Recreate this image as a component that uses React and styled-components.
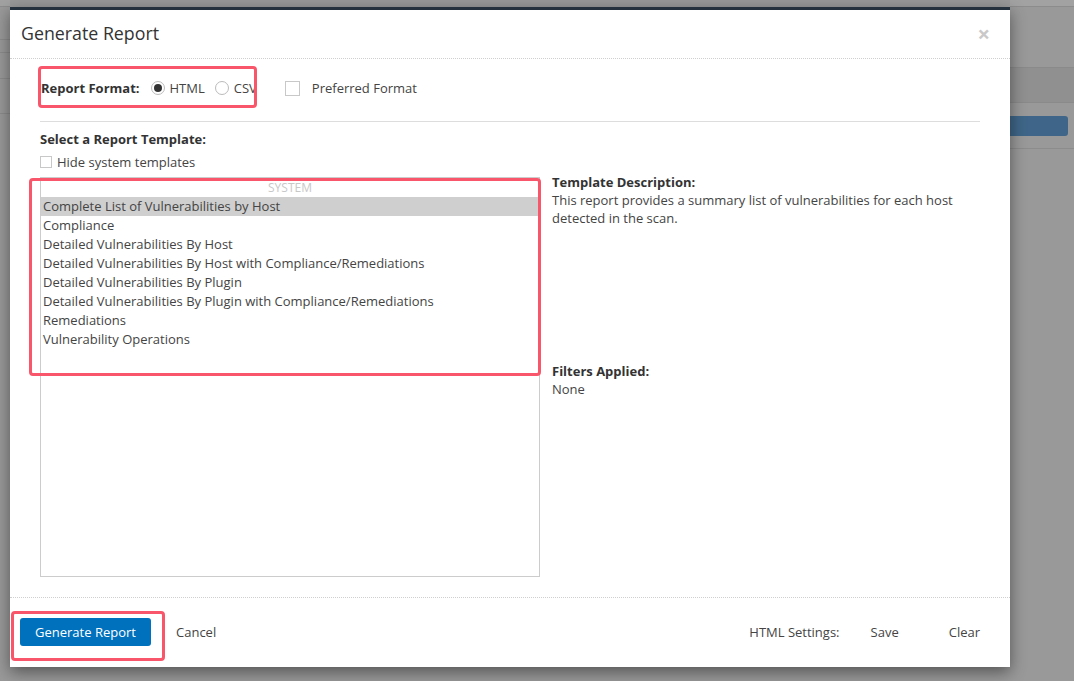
import React from 'react'
import styled, { createGlobalStyle } from "styled-components";

const GlobalStyle = createGlobalStyle`
body{
margin:0;
background:#999;
font-family:"Open Sans", "Liberation Sans", sans-serif;
font-size:13px;
color:#444;
}
`

const Page = styled.div`
width:1074px;
height:681px;
display:flex;
overflow:hidden;
background:#999;
`
// strips of the app that sit behind the overlay
const LeftRail = styled.div`
width:10px;
flex-shrink:0;
background:
  linear-gradient(#a2a2a2 0 6px, #8c8c8c 6px 7px, transparent 7px),
  linear-gradient(transparent 39px, #8c8c8c 39px 40px, transparent 40px 52px, #8c8c8c 52px 53px, transparent 53px 78px, #8c8c8c 78px 79px, transparent 79px 113px, #8c8c8c 113px 114px, transparent 114px);
`
const RightPane = styled.div`
flex:1;
display:flex;
flex-direction:column;
background:
  linear-gradient(#a2a2a2 0 6px, #8c8c8c 6px 7px, transparent 7px 67px, #8a8a8a 67px 68px, #909090 68px 102px, #8a8a8a 102px 103px, transparent 103px 148px, #8c8c8c 148px 149px, transparent 149px);
`
const BgButton = styled.div`
margin:116px 6px 0 0;
height:20px;
border-radius:0 3px 3px 0;
background:#3f6688;
`

const Dialog = styled.div`
position:relative;
z-index:1;
margin-top:7px;
width:1000px;
height:660px;
flex-shrink:0;
background:#fff;
border-top:3px solid #25313d;
box-sizing:border-box;
display:flex;
flex-direction:column;
box-shadow:0 5px 15px rgba(0,0,0,0.45);
`
const Header = styled.div`
height:49px;
box-sizing:border-box;
display:flex;
align-items:center;
justify-content:space-between;
padding:0 20px 2px 11px;
border-bottom:1px dotted #cfcfcf;
`
const Title = styled.h4`
margin:0;
font-size:17.8px;
font-weight:400;
color:#333;
`
const Close = styled.span`
font-size:22px;
font-weight:700;
color:#c9c9c9;
line-height:1;
`
const Body = styled.div`
flex:1;
padding:0 30px;
`
const FormatRow = styled.div`
position:relative;
height:63px;
box-sizing:border-box;
padding-top:18px;
display:flex;
align-items:flex-start;
border-bottom:1px solid #ddd;
line-height:22px;
`
const Bold = styled.span`
font-weight:700;
color:#333;
`
const Label = styled(Bold)`
margin-left:1px;
margin-right:11px;
`
const Option = styled.label`
display:flex;
align-items:center;
margin-right:${p => p.gap}px;
color:#444;
`
const Radio = styled.span`
width:14px;
height:14px;
box-sizing:border-box;
border:1px solid #bbb;
border-radius:50%;
margin-right:5px;
display:flex;
align-items:center;
justify-content:center;
&::after{
content:"";
width:8px;
height:8px;
border-radius:50%;
background:${p => p.checked ? "#333" : "transparent"};
}
`
const Box = styled.span`
width:${p => p.size}px;
height:${p => p.size}px;
box-sizing:border-box;
border:1px solid #c8c8c8;
margin-right:${p => p.gap}px;
background:#fff;
`
// red annotation frames drawn over the form
const Mark = styled.div`
position:absolute;
border:3px solid #f9566b;
border-radius:4px;
pointer-events:none;
`
const SectionTitle = styled(Bold)`
display:block;
margin-top:8px;
line-height:18px;
`
const CheckRow = styled.label`
display:flex;
align-items:center;
margin-top:5px;
line-height:18px;
`
const Columns = styled.div`
display:flex;
gap:12px;
margin-top:6px;
align-items:flex-start;
`
const ListWrap = styled.div`
position:relative;
`
const List = styled.div`
width:500px;
height:400px;
box-sizing:border-box;
border:1px solid #ccc;
`
const Group = styled.div`
height:18px;
line-height:18px;
text-align:center;
font-size:12px;
color:#c8c8c8;
margin-top:1px;
`
const Item = styled.div`
height:19px;
line-height:19px;
padding-left:2px;
color:#444;
background:${p => p.selected ? "#cfcfcf" : "transparent"};
`
const Side = styled.div`
width:428px;
margin-top:-4px;
line-height:18px;
`
const DescBlock = styled.div`
height:189px;
`
const Footer = styled.div`
position:relative;
height:70px;
box-sizing:border-box;
border-top:1px dotted #cfcfcf;
display:flex;
align-items:center;
padding:0 30px 2px 10px;
`
const PrimaryButton = styled.button`
width:131px;
height:28px;
border:none;
border-radius:3px;
background:#0071bc;
color:#fff;
font-family:inherit;
font-size:13px;
margin-right:25px;
`
const LinkText = styled.span`
color:#444;
margin-left:${p => p.gap || 0}px;
`
const Spacer = styled.div`
flex:1;
`

const templates = [
    "Complete List of Vulnerabilities by Host",
    "Compliance",
    "Detailed Vulnerabilities By Host",
    "Detailed Vulnerabilities By Host with Compliance/Remediations",
    "Detailed Vulnerabilities By Plugin",
    "Detailed Vulnerabilities By Plugin with Compliance/Remediations",
    "Remediations",
    "Vulnerability Operations",
]

function App() {
    return (
        <Page>
            <GlobalStyle />
            <LeftRail />
            <Dialog>
                <Header>
                    <Title>Generate Report</Title>
                    <Close>×</Close>
                </Header>
                <Body>
                    <FormatRow>
                        <Label>Report Format:</Label>
                        <Option gap={10}><Radio checked />HTML</Option>
                        <Option gap={28}><Radio />CSV</Option>
                        <Option gap={0}><Box size={15} gap={12} />Preferred Format</Option>
                        <Mark style={{ left: -2, top: 7, width: 213, height: 36 }} />
                    </FormatRow>
                    <SectionTitle>Select a Report Template:</SectionTitle>
                    <CheckRow><Box size={12} gap={5} />Hide system templates</CheckRow>
                    <Columns>
                        <ListWrap>
                            <List>
                                <Group>SYSTEM</Group>
                                {templates.map((t, i) => (
                                    <Item key={t} selected={i === 0}>{t}</Item>
                                ))}
                            </List>
                            <Mark style={{ left: -11, top: 1, width: 506, height: 192 }} />
                        </ListWrap>
                        <Side>
                            <DescBlock>
                                <Bold>Template Description:</Bold>
                                <div>This report provides a summary list of vulnerabilities for each host detected in the scan.</div>
                            </DescBlock>
                            <Bold>Filters Applied:</Bold>
                            <div>None</div>
                        </Side>
                    </Columns>
                </Body>
                <Footer>
                    <PrimaryButton>Generate Report</PrimaryButton>
                    <LinkText>Cancel</LinkText>
                    <Spacer />
                    <LinkText>HTML Settings:</LinkText>
                    <LinkText gap={31}>Save</LinkText>
                    <LinkText gap={50}>Clear</LinkText>
                    <Mark style={{ left: 1, top: 13, width: 148, height: 44 }} />
                </Footer>
            </Dialog>
            <RightPane>
                <BgButton />
            </RightPane>
        </Page>
    )
}

export default App;
